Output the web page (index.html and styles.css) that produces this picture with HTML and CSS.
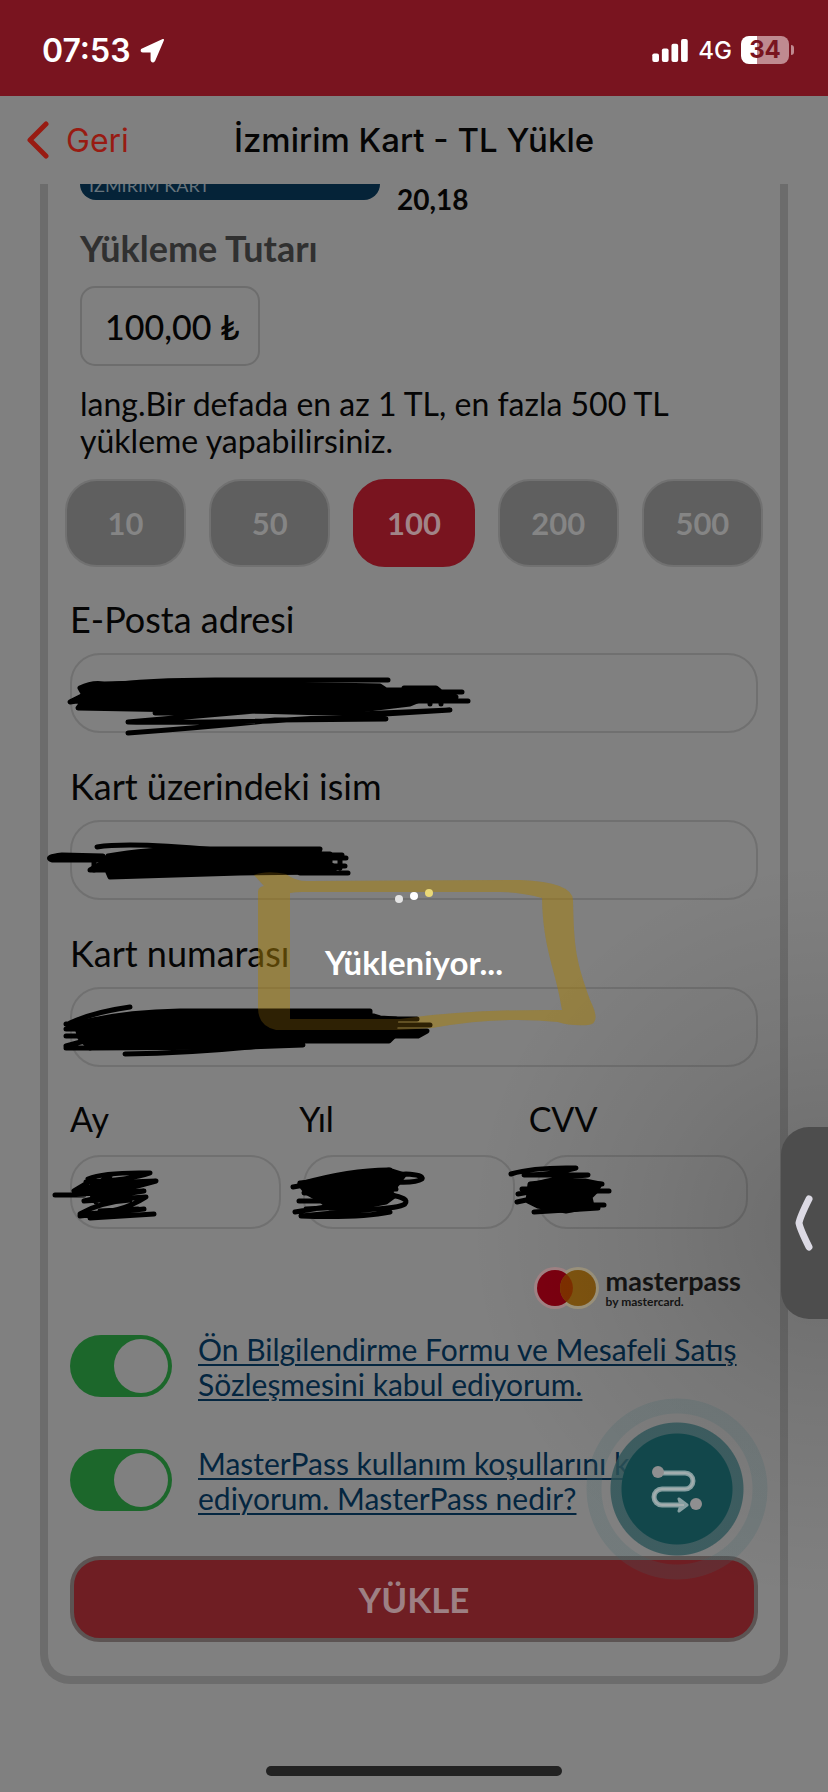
FILE: index.html
```html
<!DOCTYPE html>
<html lang="tr">
<head>
<meta charset="utf-8">
<meta name="viewport" content="width=device-width, initial-scale=1">
<title>İzmirim Kart - TL Yükle</title>
<link rel="stylesheet" href="styles.css">
</head>
<body>
<div class="screen">
  <header class="status">
    <div class="status-group">
      <span class="time">07:53</span>
      <svg class="location" viewBox="0 0 26 26" aria-hidden="true"><path d="M24 2 L2 12 Q1 14 3 14 L12 14 L12 23 Q13 26 15 23 Z" fill="#fff" stroke="#fff" stroke-width="2" stroke-linejoin="round"/></svg>
    </div>
    <div class="status-group">
      <svg class="signal" viewBox="0 0 38 24" aria-hidden="true" fill="#fff"><rect x="0" y="15" width="7" height="9" rx="2"/><rect x="10" y="10" width="7" height="14" rx="2"/><rect x="20" y="5" width="7" height="19" rx="2"/><rect x="30" y="0" width="7" height="24" rx="2"/></svg>
      <span class="network">4G</span>
      <span class="battery"><span class="battery-body">34</span><span class="battery-nub"></span></span>
    </div>
  </header>

  <nav class="nav">
    <a class="back" href="#">
      <svg class="back-icon" viewBox="0 0 24 38" aria-hidden="true"><path d="M20 3 L4 19 L20 35" fill="none" stroke="currentColor" stroke-width="5" stroke-linecap="round" stroke-linejoin="round"/></svg>
      <span>Geri</span>
    </a>
    <h1 class="title">İzmirim Kart - TL Yükle</h1>
  </nav>

  <main class="content">
    <form class="card">
      <div class="balance-row">
        <div class="transit-card"><span class="transit-name">IZMIRIM KART</span></div>
        <strong class="balance">20,18</strong>
      </div>
      <div class="amount">
        <label class="amount-label" for="amount">Yükleme Tutarı</label>
        <input class="amount-input" id="amount" type="text" value="100,00 ₺">
        <p class="hint">lang.Bir defada en az 1 TL, en fazla 500 TL yükleme yapabilirsiniz.</p>
      </div>
      <div class="chips">
        <button class="chip" type="button">10</button>
        <button class="chip" type="button">50</button>
        <button class="chip chip-active" type="button">100</button>
        <button class="chip" type="button">200</button>
        <button class="chip" type="button">500</button>
      </div>
      <div class="fields">
        <div class="field"><label class="label" for="email">E-Posta adresi</label><input class="input" id="email" type="email"></div>
        <div class="field"><label class="label" for="name">Kart üzerindeki isim</label><input class="input" id="name" type="text"></div>
        <div class="field"><label class="label" for="number">Kart numarası</label><input class="input" id="number" type="text"></div>
      </div>
      <div class="expiry">
        <div class="expiry-labels">
          <label class="label label-small" for="month">Ay</label>
          <label class="label label-small" for="year">Yıl</label>
          <label class="label label-small" for="cvv">CVV</label>
        </div>
        <div class="expiry-inputs">
          <input class="input input-small" id="month" type="text">
          <input class="input input-small" id="year" type="text">
          <input class="input input-small" id="cvv" type="text">
        </div>
      </div>
      <div class="masterpass">
        <svg class="masterpass-icon" viewBox="0 0 66 44" aria-hidden="true">
          <circle cx="21" cy="22" r="21" fill="#a38486"/><circle cx="44" cy="22" r="21" fill="#9f967f"/>
          <circle cx="21" cy="22" r="18" fill="#7d0010"/><circle cx="44" cy="22" r="18" fill="#805510"/>
          <path d="M32.500 8.200 A18 18 0 0 1 32.500 35.800 A18 18 0 0 1 32.500 8.200Z" fill="#803000"/>
        </svg>
        <div class="masterpass-text"><span class="masterpass-name">masterpass</span><span class="masterpass-by">by mastercard.</span></div>
      </div>
      <div class="consents">
        <div class="consent">
          <input class="toggle" type="checkbox" role="switch" id="terms" aria-labelledby="terms-text" checked>
          <a class="consent-link" id="terms-text" href="#">Ön Bilgilendirme Formu ve Mesafeli Satış Sözleşmesini kabul ediyorum.</a>
        </div>
        <div class="consent">
          <input class="toggle" type="checkbox" role="switch" id="mp" aria-labelledby="mp-text" checked>
          <a class="consent-link" id="mp-text" href="#">MasterPass kullanım koşullarını kabul ediyorum. MasterPass nedir?</a>
        </div>
      </div>
      <button class="submit" type="submit">YÜKLE</button>
    </form>
  </main>
  <footer class="home"><span class="home-bar"></span></footer>

  <div class="shade"></div>

  <button class="fab" type="button" aria-label="Rota">
    <svg class="fab-icon" viewBox="0 0 52 48" fill="none" aria-hidden="true">
      <g stroke="#869fa1" stroke-width="5" stroke-linejoin="round"><path d="M10 8 H34 A8 8 0 0 1 34 24 H11 A8 8 0 0 0 11 40 H33"/><path d="M28 34 L36 40 L28 46 L30 40 Z" fill="#869fa1" stroke-width="3"/></g>
      <path d="M10 8 H34 A8 8 0 0 1 34 24 H11 A8 8 0 0 0 11 40 H33" stroke="#a3adae" stroke-width="2"/>
      <circle cx="7" cy="7" r="6" fill="#8f8f90"/><circle cx="45" cy="39" r="6" fill="#8f8f90"/>
    </svg>
  </button>

  <button class="side-tab" type="button" aria-label="Paneli aç">
    <svg class="side-icon" viewBox="0 0 18 56" aria-hidden="true"><path d="M14 4 Q5 22 4 28 Q5 34 14 52" fill="none" stroke="#dcdae4" stroke-width="7" stroke-linecap="round" stroke-linejoin="round"/></svg>
  </button>

  <svg class="marks" viewBox="0 0 828 1792" fill="none" aria-hidden="true">
    <defs>
      <g id="frame" stroke-linejoin="round">
        <path d="M254 875 Q266 870 286 874 Q296 882 310 881 L520 880 Q572 882 573 900 C574 950 576 960 590 1000 Q602 1024 588 1025 Q570 1026 558 1022 Q500 1016 432 1028 L400 1030 H276 Q258 1026 258 1008 V892 Q258 887 264 886 Z M290 893 V1019 H400 Q470 1009 562 1010 C556 970 543 950 542 898 Q520 892 500 892 H302 Q295 892 290 893 Z" fill-rule="evenodd"/>
      </g>
    </defs>
    <use href="#frame" fill="#a08000" opacity=".32"/>
    <g fill="#000" stroke="#000" stroke-width="5" stroke-linecap="round" stroke-linejoin="round">
      <path d="M80 688 Q92 682 104 684 L180 682 L380 686 L386 690 L404 690 L420 689 L422 699 L410 704 L360 710 L240 711 L78 708 L84 700 L70 702 L84 695 Z"/>
      <path d="M100 686 Q150 680 215 680 H388 M404 688 H436 L442 693 M418 692 L462 692 M416 697 H456 M416 701 H468 M430 690 V704 M441 692 V704 M155 713 L260 711 M128 722 Q200 716 255 711 L360 714 L450 710 Q340 717 270 721 Q180 723 128 722 M128 733 Q210 727 275 720 L386 719" fill="none"/>
      <path d="M108 856 Q145 849 200 849 L320 849 L318 854 L330 854 L330 864 L336 868 L330 872 L240 873 L110 877 L107 870 L90 870 L104 862 Z"/>
      <path d="M97 847 Q130 842 215 850 M103 856 L62 855 Q44 857 52 860 L102 860 M94 859 V870 M320 855 H342 M320 858 H346 M330 866 H345 M300 873 H348 M340 858 V868" fill="none"/>
      <path d="M76 1024 Q120 1012 180 1011 H300 L370 1011 V1015 L380 1018 L396 1019 L394 1036 L389 1041 H304 L250 1047 L90 1048 L80 1038 Z"/>
      <path d="M66 1024 H90 M66 1029 H90 M66 1036 H90 M66 1048 H90 M66 1046 L88 1040 M70 1023 Q94 1012 130 1007 M390 1019 H417 M390 1025 H430 M390 1031 H427 L418 1036 H390 M125 1054 Q190 1053 250 1047 L303 1045" fill="none"/>
      <path d="M55 1195 H84 M88 1179 Q105 1172 150 1173 Q130 1180 86 1182 M94 1179 L74 1191 Q118 1181 156 1181 Q120 1192 76 1194 L144 1191 Q95 1198 84 1201 L146 1197 Q120 1214 80 1214 Q100 1202 130 1200 M144 1209 Q95 1214 80 1216 M90 1218 L154 1214 M84 1188 L140 1183 L92 1195 M110 1176 L86 1190 L130 1187 M100 1211 L138 1209 M96 1188 V1202" fill="none"/>
      <path d="M300 1184 Q350 1170 388 1170 L404 1175 L398 1183 L390 1192 L394 1196 L386 1202 L350 1209 L330 1208 L322 1201 L306 1192 Z"/>
      <path d="M293 1187 L390 1170 M300 1183 L406 1174 Q424 1175 422 1179 Q416 1183 396 1182 M304 1193 L396 1189 M299 1201 H330 M295 1212 L350 1203 M390 1195 Q410 1198 405 1204 Q398 1208 375 1209 L301 1216 Q360 1218 390 1212 M306 1209 L360 1206" fill="none"/>
      <path d="M530 1184 L560 1181 H585 L600 1184 L596 1191 L590 1197 L592 1206 L566 1211 L538 1206 L528 1201 Z"/>
      <path d="M511 1174 Q535 1167 576 1168 Q545 1176 524 1175 L588 1175 Q560 1177 532 1185 M585 1184 H602 M585 1191 H609 M590 1205 H604 M534 1212 L598 1208 M522 1189 H540 M518 1194 L540 1190 M517 1202 L540 1197" fill="none"/>
    </g>
    <use href="#frame" fill="#b08010" opacity=".26"/>
  </svg>

  <div class="loading" role="status">
    <svg class="dots" viewBox="0 0 38 16" aria-hidden="true"><circle cx="4" cy="11" r="4" fill="#e4e4e4"/><circle cx="19" cy="8" r="4" fill="#fff"/><circle cx="34" cy="5" r="4" fill="#ead978"/></svg>
    <span>Yükleniyor...</span>
  </div>
</div>
</body>
</html>
```
FILE: styles.css
```css
* { box-sizing: border-box; }
body { margin: 0; background: #808080; color: #050505; font-family: Lato, "Noto Sans", sans-serif; }
button, input { font-family: inherit; margin: 0; }
.screen { position: relative; min-height: 100vh; display: flex; flex-direction: column; overflow: hidden; background: #808080; }

.status { height: 96px; padding: 4px 34px 0 42px; display: flex; align-items: center; justify-content: space-between; background: #79141f; color: #fff; font-family: Inter, sans-serif; }
.status-group { display: flex; align-items: center; gap: 9px; }
.time { font-size: 32px; font-weight: 600; }
.location { width: 25px; height: 25px; }
.signal { width: 37px; height: 23px; }
.network { font-size: 24px; font-weight: 500; }
.battery { display: flex; align-items: center; gap: 2px; }
.battery-body { width: 48px; height: 28px; border-radius: 8px; background: linear-gradient(90deg, #fff 34%, #bf8a90 34%); color: #79141f; font-size: 24px; line-height: 28px; font-weight: 700; text-align: center; }
.battery-nub { width: 3px; height: 10px; border-radius: 0 4px 4px 0; background: #bf8a90; }

.nav { position: relative; height: 88px; display: flex; align-items: center; justify-content: center; font-family: Inter, sans-serif; }
.back { position: absolute; left: 26px; top: 0; bottom: 0; display: flex; align-items: center; gap: 16px; color: #981b12; font-size: 32px; text-decoration: none; }
.back-icon { width: 24px; height: 38px; }
.title { margin: 0; font-size: 33px; font-weight: 500; }

.content { padding: 0 40px; }
.card { border: 8px solid #6c6c6c; border-top: 0; border-radius: 0 0 30px 30px; padding: 0 22px 34px; }
.balance-row { display: flex; gap: 17px; height: 36px; padding-left: 10px; }
.transit-card { width: 300px; height: 16px; padding: 0 0 3px 9px; border-radius: 0 0 20px 20px; background: #052338; overflow: hidden; display: flex; align-items: flex-end; }
.transit-name { font-size: 18px; line-height: 23px; color: #68747c; }
.balance { font-size: 28px; line-height: 30px; font-weight: 700; }
.amount { padding: 8px 10px 0; display: flex; flex-direction: column; align-items: flex-start; }
.amount-label { font-size: 36px; line-height: 40px; font-weight: 700; color: #303030; }
.amount-input { width: 180px; height: 80px; margin-top: 18px; padding: 0 16px 0 23px; border: 2px solid #6d6d6d; border-radius: 15px; background: transparent; color: #050505; font-size: 34px; font-weight: 500; }
.hint { margin: 19px 0 0; font-size: 32px; line-height: 37px; }
.chips { display: grid; grid-template-columns: repeat(5, 1fr); gap: 23px; margin: 20px -5px 0; }
.chip { height: 88px; padding: 0; border: 2px solid #717171; border-radius: 32px; background: #5f5f5f; color: #858585; font-size: 31px; font-weight: 700; }
.chip-active { border-color: #79141f; background: #79141f; color: #a18488; }
.fields { display: flex; flex-direction: column; gap: 33px; margin-top: 32px; }
.field { display: flex; flex-direction: column; gap: 14px; }
.label { font-size: 36px; line-height: 40px; }
.label-small { font-size: 34px; }
.input { width: 100%; min-width: 0; height: 80px; padding: 0 24px; border: 2px solid #707070; border-radius: 30px; background: transparent; font-size: 30px; }
.expiry { margin-top: 32px; display: flex; flex-direction: column; gap: 16px; }
.expiry-labels { display: grid; grid-template-columns: repeat(3, 1fr); }
.expiry-inputs { display: flex; gap: 22px; padding-right: 10px; }
.input-small { height: 74px; }
.masterpass { display: flex; align-items: center; justify-content: flex-end; gap: 6px; margin-top: 37px; padding-right: 17px; }
.masterpass-icon { width: 66px; height: 44px; }
.masterpass-text { display: flex; flex-direction: column; color: #151515; }
.masterpass-name { font-size: 27px; line-height: 28px; font-weight: 700; }
.masterpass-by { font-size: 12px; line-height: 14px; font-weight: 700; }
.consents { display: flex; flex-direction: column; gap: 42px; margin-top: 20px; }
.consent { display: flex; align-items: center; gap: 26px; }
.toggle { appearance: none; flex: none; width: 102px; height: 62px; padding: 4px; border-radius: 31px; background: #1c672b; display: flex; justify-content: flex-end; }
.toggle::before { content: ""; width: 54px; height: 54px; border-radius: 50%; background: #808080; }
.consent-link { padding-top: 2px; font-size: 30px; line-height: 35px; color: #042640; text-underline-offset: 3px; text-decoration-thickness: 2px; }
.submit { width: 100%; height: 86px; margin-top: 40px; border: 4px solid #5c5453; border-radius: 30px; background: #6f1e23; color: #9d8084; font-size: 35px; font-weight: 700; display: block; }
.home { margin-top: auto; padding-bottom: 16px; display: flex; justify-content: center; }
.home-bar { width: 296px; height: 10px; border-radius: 5px; background: #222; }

.shade { position: absolute; right: 0; top: 860px; width: 380px; height: 740px; pointer-events: none; background: radial-gradient(ellipse 360px 370px at 100% 50%, rgba(0, 0, 0, .16), rgba(0, 0, 0, .07) 50%, transparent); }
.fab { position: absolute; right: 60px; top: 1398px; width: 182px; height: 182px; padding: 0; border: 0; border-radius: 50%; display: flex; align-items: center; justify-content: center; background: radial-gradient(circle, #12474b 55px, rgba(45, 84, 88, .8) 56px, rgba(45, 84, 88, .8) 66px, transparent 67px, transparent 75px, rgba(60, 100, 105, .2) 76px, rgba(60, 100, 105, .2) 90px, transparent 91px); }
.fab-icon { width: 52px; height: 48px; }
.side-tab { position: absolute; right: 0; top: 1127px; width: 47px; height: 192px; padding: 0 0 0 14px; border: 0; border-radius: 28px 0 0 28px; background: #4d4d4d; display: flex; align-items: center; }
.side-icon { width: 18px; height: 56px; }
.marks { position: absolute; left: 0; top: 0; width: 100%; pointer-events: none; }
.loading { position: absolute; left: 0; right: 0; top: 888px; display: flex; flex-direction: column; align-items: center; gap: 39px; color: #fff; font-size: 33px; line-height: 38px; font-weight: 700; }
.dots { width: 38px; height: 16px; }
```
